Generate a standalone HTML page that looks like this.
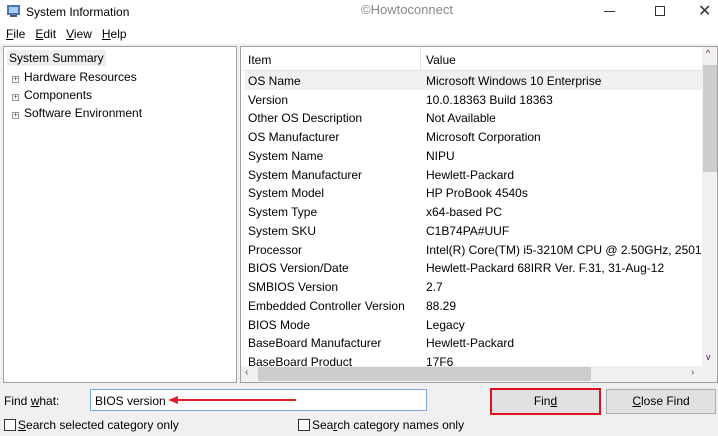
<!DOCTYPE html>
<html><head><style>
*{margin:0;padding:0;box-sizing:border-box}
body{width:718px;height:436px;background:#f0f0f0;font-family:"Liberation Sans",sans-serif;font-size:12px;color:#000;position:relative;overflow:hidden}
.a{position:absolute;white-space:nowrap}
u{text-decoration:underline}
</style></head><body>
<div class="a" style="left:0;top:0;width:718px;height:44px;background:#fff"></div>
<svg class="a" style="left:7px;top:4px" width="14" height="14"><rect x="0" y="1" width="13" height="10" fill="#4a76b8"/><rect x="2" y="3" width="9" height="6" fill="#a9cdf0"/><rect x="3" y="11" width="7" height="2" fill="#556"/></svg>
<div class="a" style="left:26px;top:5px">System Information</div>
<div class="a" style="left:361px;top:2px;color:#888;font-size:13px">©Howtoconnect</div>
<div class="a" style="left:604px;top:11px;width:11px;height:1px;background:#333"></div>
<div class="a" style="left:655px;top:6px;width:10px;height:10px;border:1px solid #333"></div>
<div class="a" style="left:698px;top:1px;font-size:16px;color:#333">✕</div>
<div class="a" style="left:6px;top:27px"><u>F</u>ile&nbsp;&nbsp;&nbsp;<u>E</u>dit&nbsp;&nbsp;&nbsp;<u>V</u>iew&nbsp;&nbsp;&nbsp;<u>H</u>elp</div>
<div class="a" style="left:3px;top:46px;width:234px;height:337px;background:#fff;border:1px solid #a0a0a0"></div>
<div class="a" style="left:7px;top:50px;background:#eee;padding:1px 2px">System Summary</div>
<div class="a" style="left:12px;top:68px;color:#000;font-size:12px;line-height:18px">
<div><span style="display:inline-block;width:7px;height:7px;border:1px solid #999;font-size:7px;line-height:5px;text-align:center;margin-right:5px;color:#333">+</span>Hardware Resources</div>
<div><span style="display:inline-block;width:7px;height:7px;border:1px solid #999;font-size:7px;line-height:5px;text-align:center;margin-right:5px;color:#333">+</span>Components</div>
<div><span style="display:inline-block;width:7px;height:7px;border:1px solid #999;font-size:7px;line-height:5px;text-align:center;margin-right:5px;color:#333">+</span>Software Environment</div></div>
<div class="a" style="left:240px;top:46px;width:478px;height:337px;background:#fff;border:1px solid #a0a0a0;overflow:hidden">
<div class="a" style="left:0;top:0;width:462px;height:24px;border-bottom:1px solid #e5e5e5"></div>
<div class="a" style="left:179px;top:0;width:1px;height:24px;background:#e5e5e5"></div>
<div class="a" style="left:7px;top:6px">Item</div><div class="a" style="left:185px;top:6px">Value</div>
<div class="a" style="left:4px;top:24px;width:458px;height:19px;background:#f0f0f0"></div>
<div class="a" style="left:7px;top:25px;line-height:18.73px;width:455px;overflow:hidden">
OS Name<br>Version<br>Other OS Description<br>OS Manufacturer<br>System Name<br>System Manufacturer<br>System Model<br>System Type<br>System SKU<br>Processor<br>BIOS Version/Date<br>SMBIOS Version<br>Embedded Controller Version<br>BIOS Mode<br>BaseBoard Manufacturer<br>BaseBoard Product</div>
<div class="a" style="left:185px;top:25px;line-height:18.73px;width:277px;overflow:hidden">
Microsoft Windows 10 Enterprise<br>10.0.18363 Build 18363<br>Not Available<br>Microsoft Corporation<br>NIPU<br>Hewlett-Packard<br>HP ProBook 4540s<br>x64-based PC<br>C1B74PA#UUF<br>Intel(R) Core(TM) i5-3210M CPU @ 2.50GHz, 2501 Mhz<br>Hewlett-Packard 68IRR Ver. F.31, 31-Aug-12<br>2.7<br>88.29<br>Legacy<br>Hewlett-Packard<br>17F6</div>
<div class="a" style="left:461px;top:0;width:17px;height:320px;background:#f0f0f0"></div>
<div class="a" style="left:462px;top:18px;width:14px;height:107px;background:#cdcdcd"></div>
<div class="a" style="left:465px;top:1px;font-size:9px;color:#606">^</div>
<div class="a" style="left:465px;top:305px;font-size:9px;color:#606">v</div>
<div class="a" style="left:0;top:319px;width:478px;height:17px;background:#f0f0f0"></div>
<div class="a" style="left:17px;top:320px;width:333px;height:14px;background:#cdcdcd"></div>
<div class="a" style="left:4px;top:320px;font-size:10px;color:#555">‹</div>
<div class="a" style="left:450px;top:320px;font-size:10px;color:#555">›</div>
</div>
<div class="a" style="left:4px;top:394px">Find <u>w</u>hat:</div>
<div class="a" style="left:90px;top:389px;width:337px;height:22px;background:#fff;border:1px solid #7aa7d8"></div>
<div class="a" style="left:95px;top:394px">BIOS version</div>
<svg class="a" style="left:168px;top:395px" width="130" height="10"><polygon points="0,5 10,1 10,9" fill="#e0202a"/><rect x="8" y="4" width="120" height="2" fill="#e0202a"/></svg>
<div class="a" style="left:490px;top:388px;width:111px;height:27px;background:#e1e1e1;border:2px solid #e01020;text-align:center;line-height:23px">Fin<u>d</u></div>
<div class="a" style="left:606px;top:389px;width:110px;height:25px;background:#e1e1e1;border:1px solid #adadad;text-align:center;line-height:23px"><u>C</u>lose Find</div>
<div class="a" style="left:4px;top:419px;width:12px;height:12px;border:1px solid #333;background:#fff"></div>
<div class="a" style="left:18px;top:418px"><u>S</u>earch selected category only</div>
<div class="a" style="left:298px;top:419px;width:12px;height:12px;border:1px solid #333;background:#fff"></div>
<div class="a" style="left:312px;top:418px">Sea<u>r</u>ch category names only</div>
</body></html>
